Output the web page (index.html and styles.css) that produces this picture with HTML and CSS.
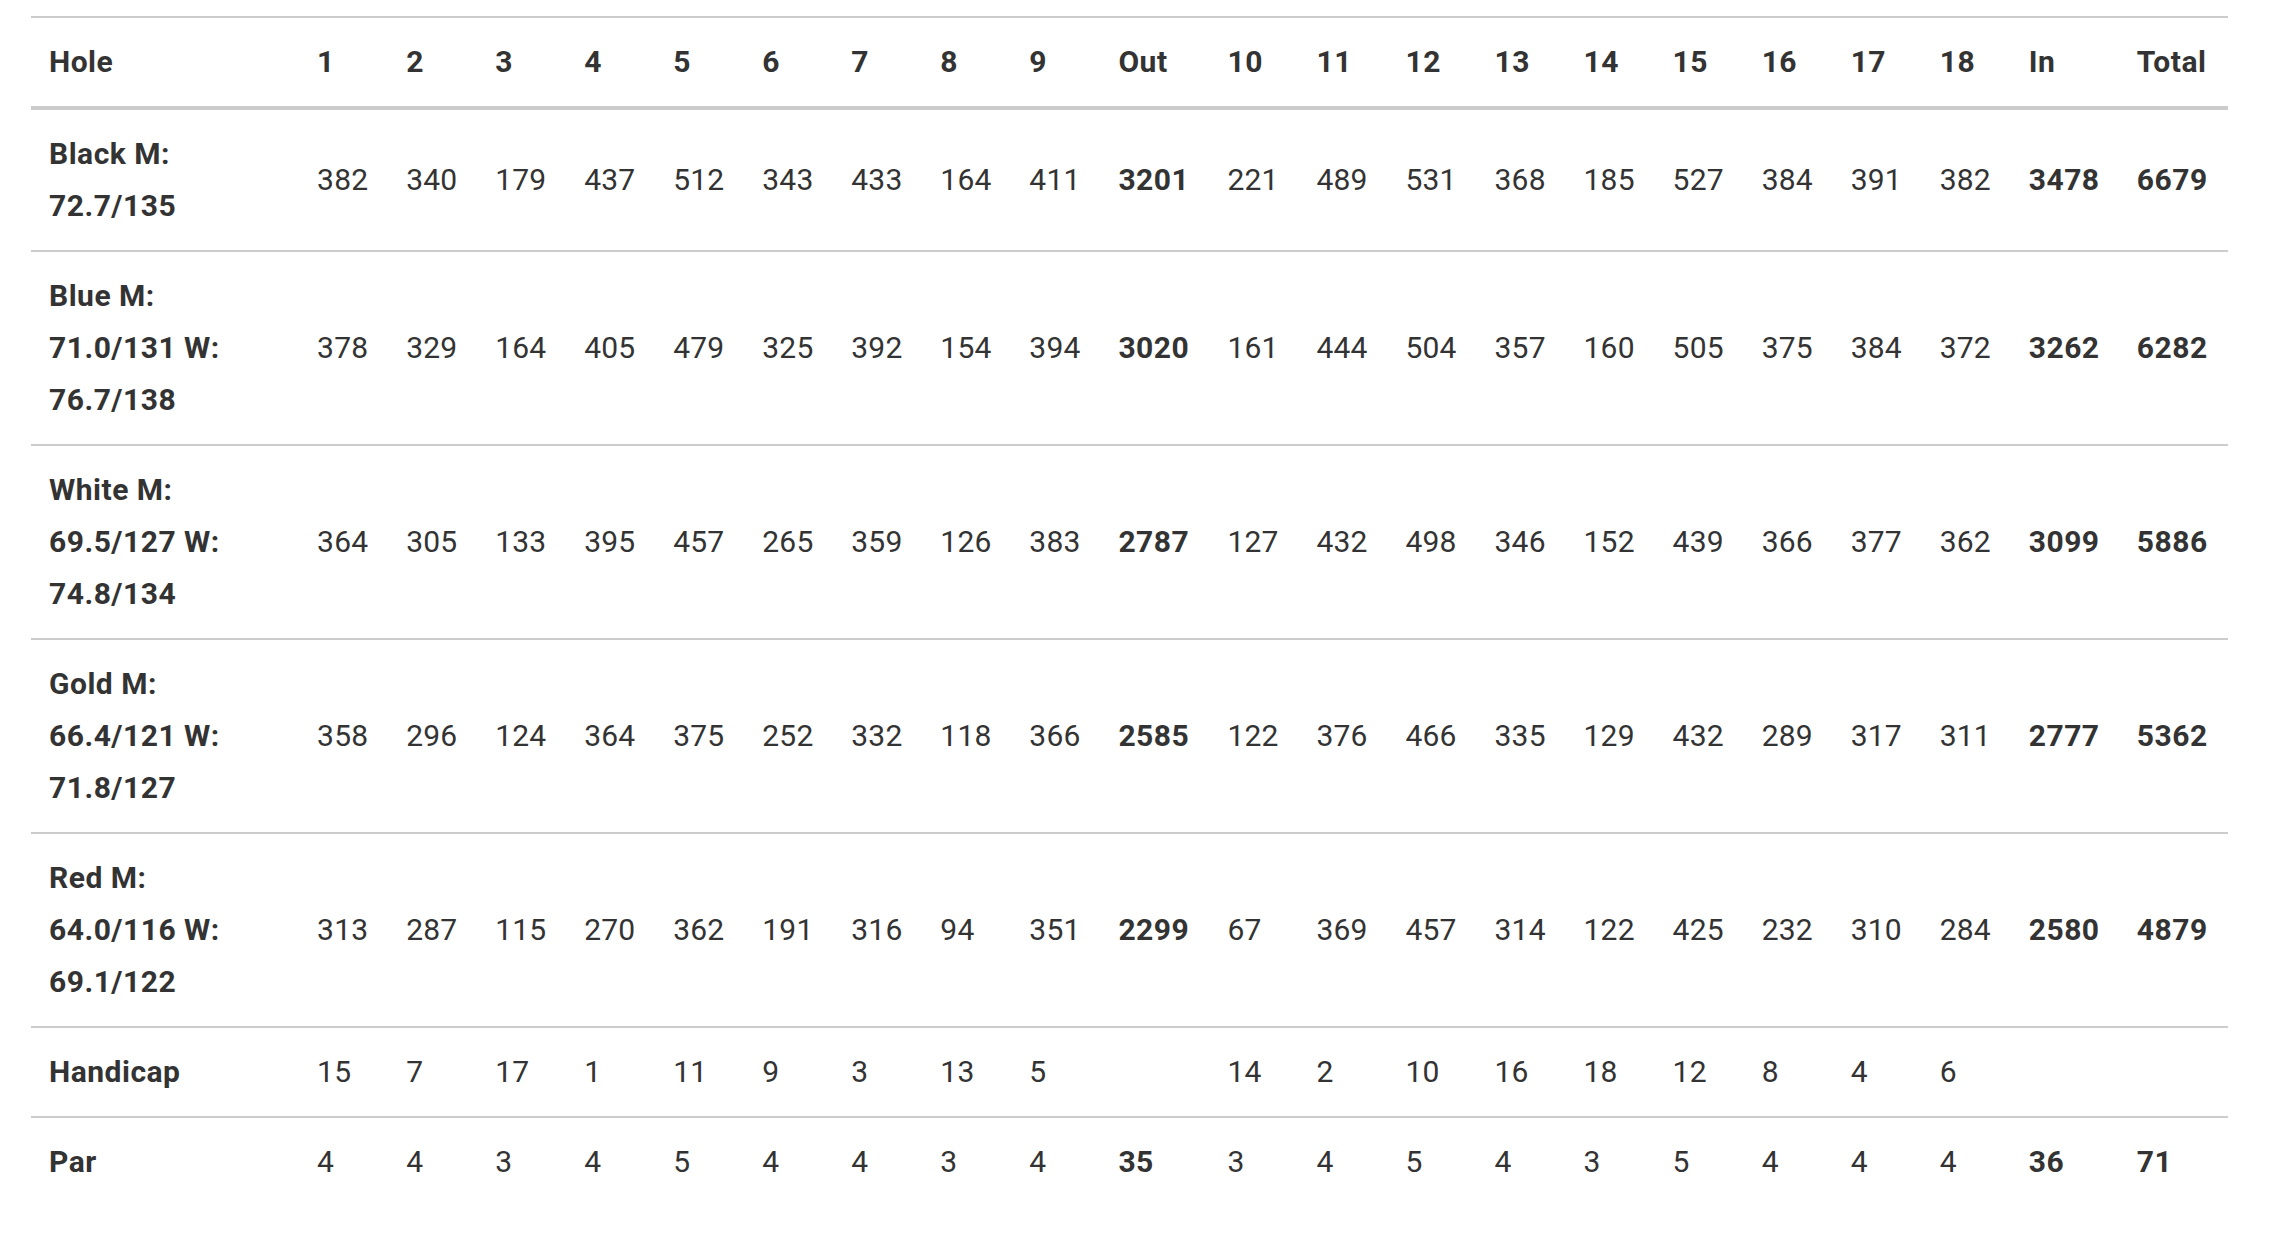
FILE: index.html
```html
<!DOCTYPE html>
<html lang="en">
<head>
<meta charset="utf-8">
<title>Scorecard</title>
<link rel="stylesheet" href="styles.css">
</head>
<body>
<div class="wrap">
<table class="scorecard">
  <colgroup>
    <col class="c-label">
    <col class="c-hole"><col class="c-hole"><col class="c-hole"><col class="c-hole"><col class="c-hole"><col class="c-hole"><col class="c-hole"><col class="c-hole"><col class="c-hole">
    <col class="c-sum">
    <col class="c-hole"><col class="c-hole"><col class="c-hole"><col class="c-hole"><col class="c-hole"><col class="c-hole"><col class="c-hole"><col class="c-hole"><col class="c-hole">
    <col class="c-in">
    <col class="c-sum">
  </colgroup>
  <thead>
    <tr>
      <th>Hole</th><th>1</th><th>2</th><th>3</th><th>4</th><th>5</th><th>6</th><th>7</th><th>8</th><th>9</th><th>Out</th><th>10</th><th>11</th><th>12</th><th>13</th><th>14</th><th>15</th><th>16</th><th>17</th><th>18</th><th>In</th><th>Total</th>
    </tr>
  </thead>
  <tbody>
    <tr>
      <th>Black M:<br>72.7/135</th><td>382</td><td>340</td><td>179</td><td>437</td><td>512</td><td>343</td><td>433</td><td>164</td><td>411</td><td class="b">3201</td><td>221</td><td>489</td><td>531</td><td>368</td><td>185</td><td>527</td><td>384</td><td>391</td><td>382</td><td class="b">3478</td><td class="b">6679</td>
    </tr>
    <tr>
      <th>Blue M:<br>71.0/131 W:<br>76.7/138</th><td>378</td><td>329</td><td>164</td><td>405</td><td>479</td><td>325</td><td>392</td><td>154</td><td>394</td><td class="b">3020</td><td>161</td><td>444</td><td>504</td><td>357</td><td>160</td><td>505</td><td>375</td><td>384</td><td>372</td><td class="b">3262</td><td class="b">6282</td>
    </tr>
    <tr>
      <th>White M:<br>69.5/127 W:<br>74.8/134</th><td>364</td><td>305</td><td>133</td><td>395</td><td>457</td><td>265</td><td>359</td><td>126</td><td>383</td><td class="b">2787</td><td>127</td><td>432</td><td>498</td><td>346</td><td>152</td><td>439</td><td>366</td><td>377</td><td>362</td><td class="b">3099</td><td class="b">5886</td>
    </tr>
    <tr>
      <th>Gold M:<br>66.4/121 W:<br>71.8/127</th><td>358</td><td>296</td><td>124</td><td>364</td><td>375</td><td>252</td><td>332</td><td>118</td><td>366</td><td class="b">2585</td><td>122</td><td>376</td><td>466</td><td>335</td><td>129</td><td>432</td><td>289</td><td>317</td><td>311</td><td class="b">2777</td><td class="b">5362</td>
    </tr>
    <tr>
      <th>Red M:<br>64.0/116 W:<br>69.1/122</th><td>313</td><td>287</td><td>115</td><td>270</td><td>362</td><td>191</td><td>316</td><td>94</td><td>351</td><td class="b">2299</td><td>67</td><td>369</td><td>457</td><td>314</td><td>122</td><td>425</td><td>232</td><td>310</td><td>284</td><td class="b">2580</td><td class="b">4879</td>
    </tr>
    <tr>
      <th>Handicap</th><td>15</td><td>7</td><td>17</td><td>1</td><td>11</td><td>9</td><td>3</td><td>13</td><td>5</td><td class="b"></td><td>14</td><td>2</td><td>10</td><td>16</td><td>18</td><td>12</td><td>8</td><td>4</td><td>6</td><td class="b"></td><td class="b"></td>
    </tr>
    <tr>
      <th>Par</th><td>4</td><td>4</td><td>3</td><td>4</td><td>5</td><td>4</td><td>4</td><td>3</td><td>4</td><td class="b">35</td><td>3</td><td>4</td><td>5</td><td>4</td><td>3</td><td>5</td><td>4</td><td>4</td><td>4</td><td class="b">36</td><td class="b">71</td>
    </tr>
  </tbody>
</table>
</div>
</body>
</html>
```

FILE: styles.css
```css
html, body {
  margin: 0;
  padding: 0;
  background: #ffffff;
}

.wrap {
  padding: 16px 0 0 31px;
}

.scorecard {
  width: 2197px;
  table-layout: fixed;
  border-collapse: collapse;
  font-family: Roboto, "Liberation Sans", Arial, sans-serif;
  font-size: 30px;
  line-height: 52px;
  color: #333333;
}

.c-label { width: 268px; }
.c-hole { width: 89px; }
.c-sum { width: 109px; }
.c-in { width: 108px; }

.scorecard th,
.scorecard td {
  padding: 18px 18px;
  text-align: left;
  vertical-align: middle;
}

.scorecard th {
  font-weight: 700;
  letter-spacing: 0.5px;
}

.scorecard td {
  font-weight: 400;
  letter-spacing: 0.2px;
}

.scorecard td.b {
  font-weight: 700;
  letter-spacing: 0.5px;
}

.scorecard thead th {
  border-top: 2px solid #cccccc;
  border-bottom: 4px solid #cccccc;
}

.scorecard tbody tr + tr th,
.scorecard tbody tr + tr td {
  border-top: 2px solid #cccccc;
}
```
